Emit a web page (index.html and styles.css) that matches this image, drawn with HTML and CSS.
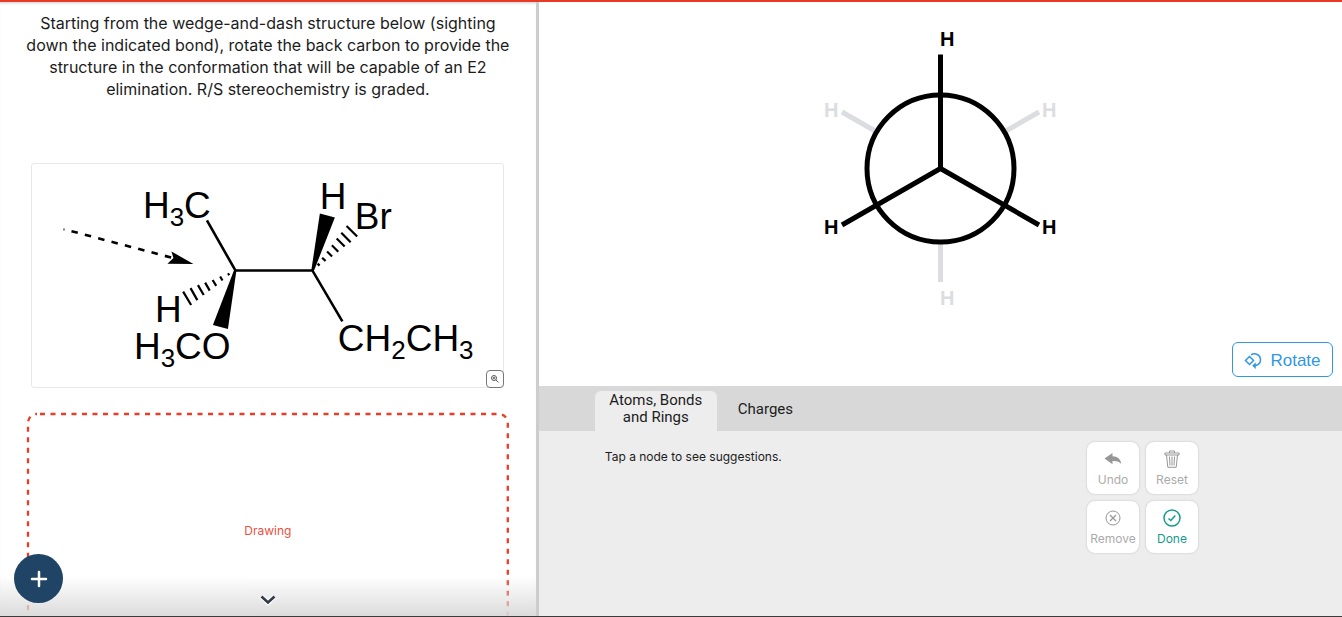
FILE: index.html
```html
<!DOCTYPE html>
<html lang="en">
<head>
  <meta charset="UTF-8">
  <meta name="viewport" content="width=device-width, initial-scale=1.0">
  <title>Newman Projection</title>
  <link rel="stylesheet" href="styles.css">
</head>
<body>
  <main class="workspace">
    <section class="question">
      <p class="question-text">Starting from the wedge-and-dash structure below (sighting down the indicated bond), rotate the back carbon to provide the structure in the conformation that will be capable of an E2 elimination. R/S stereochemistry is graded.</p>

      <div class="structure">
        <svg class="molecule" viewBox="32 164 471 223" role="img" aria-label="Wedge-and-dash structure">
          <!-- sight line -->
          <path d="M64 228.500v2" stroke="#000" stroke-width="1"/>
          <path d="M71.500 231.200L172 257.800" stroke="#000" stroke-width="2.600" stroke-dasharray="6.500 7.300"/>
          <path d="M193.500 264L171.500 251.500L173.500 258L167.500 263.700z"/>
          <!-- bonds -->
          <path d="M207 220.500L235.500 270.500H312.500L342.500 321.500" fill="none" stroke="#000" stroke-width="2.600"/>
          <path d="M234 270.500L213 325L228 329L236.500 270.500z"/>
          <path d="M311.500 270L320 213.500L335 217.500L314 271z"/>
          <!-- hashed bonds -->
          <path d="M228.100 273.300l1.200 2M220.200 276.600l2.400 4M212.700 280l3.600 6M205.200 282.700l4.600 8M198 285.200l5.800 9.800M190.600 288.200l6.800 12M183.200 291.700l8 13.400" stroke="#000" stroke-width="2.200"/>
          <path d="M317.700 263.700l2 2M322.300 257.700l3.400 3.400M327.200 251.500l5 5M332 245.300l6.400 6.400M336.800 238.600l8 8M341.400 232.800l9.400 9.400M346.700 226l10.600 10.600" stroke="#000" stroke-width="2.200"/>
          <g class="atom">
            <text x="143" y="218">H<tspan class="sub" dy="8">3</tspan><tspan dy="-8">C</tspan></text>
            <text x="155" y="322">H</text>
            <text x="134" y="359">H<tspan class="sub" dy="8">3</tspan><tspan dy="-8">CO</tspan></text>
            <text x="320" y="209">H</text>
            <text x="355" y="229">Br</text>
            <text x="338" y="351">CH<tspan class="sub" dy="8">2</tspan><tspan dy="-8">CH</tspan><tspan class="sub" dy="8">3</tspan></text>
          </g>
        </svg>
        <button class="zoom" type="button" aria-label="Enlarge">
          <svg width="8" height="8" viewBox="0 0 8 8" fill="none" stroke="#555">
            <circle cx="3" cy="3" r="2.500"/>
            <path d="M5 5l2.500 2.500M1.800 3h2.400M3 1.800v2.400"/>
          </svg>
        </button>
      </div>

      <div class="drawing">
        <svg class="drawing-border">
          <rect x="1" y="1" width="100%" height="100%" rx="9"/>
        </svg>
        <span>Drawing</span>
      </div>

      <div class="fade">
        <button class="scroll-down" type="button" aria-label="Scroll down">
          <svg width="18" height="12" viewBox="0 0 18 12" fill="none">
            <path d="M2.500 2.500L9 8.500L15.500 2.500" stroke="#fff" stroke-width="5"/>
            <path d="M2.500 2.500L9 8.500L15.500 2.500" stroke="#343b48" stroke-width="2.600"/>
          </svg>
        </button>
      </div>
      <button class="add" type="button" aria-label="Add">
        <svg width="18" height="18" viewBox="0 0 18 18" stroke="#fff" stroke-width="2.500" stroke-linecap="round">
          <path d="M9 2v14M2 9h14"/>
        </svg>
      </button>
    </section>

    <section class="editor">
      <div class="canvas">
        <svg class="newman" width="236" height="290" viewBox="822 20 236 290" role="img" aria-label="Newman projection">
          <g class="back">
            <path d="M842 112L876 131.500M1039 112L1005 131.500M940.500 242V282"/>
            <text x="824" y="117">H</text>
            <text x="1042" y="117">H</text>
            <text x="940" y="305">H</text>
          </g>
          <g class="front">
            <circle cx="940.500" cy="168.500" r="73.500"/>
            <path d="M940.500 54.500V168.500L842 225M940.500 168.500L1039 225"/>
            <text x="940" y="46">H</text>
            <text x="824" y="234">H</text>
            <text x="1042" y="234">H</text>
          </g>
        </svg>
        <button class="rotate" type="button">
          <svg width="18" height="18" viewBox="0 0 18 18" fill="none" stroke="#2f97e4" stroke-width="1.500">
            <path d="M5.500 4.500L9.500 8.500L5.500 12.500L1.500 8.500z"/>
            <path d="M7 2.800C11 .2 16.500 2.800 16.500 8C16.500 11.500 13.500 13.700 10 13.700"/>
            <path d="M11.500 10.800L8.500 13.700L11.500 16.600z" fill="#2f97e4" stroke-width=".5"/>
          </svg>
          Rotate
        </button>
      </div>

      <div class="tabs">
        <button class="tab active" type="button">Atoms, Bonds<br>and Rings</button>
        <button class="tab" type="button">Charges</button>
      </div>

      <div class="tools">
        <p class="hint">Tap a node to see suggestions.</p>
        <div class="tool-grid">
          <button class="tool" type="button">
            <svg width="18" height="18" viewBox="0 0 18 18" fill="#979797">
              <path d="M.5 8.500L8.500 3v3.200C13.500 6.200 16.800 9 17.300 14C15 11.300 12.500 10.800 8.500 10.900v3.300z"/>
            </svg>
            Undo
          </button>
          <button class="tool" type="button">
            <svg width="18" height="18" viewBox="0 0 18 18" fill="none" stroke="#979797">
              <path d="M2 3h14v2H2zM6.500 3V1h5v2M3.500 5l1.300 12.300h8.400L14.500 5M6.500 6.500l.5 9M9 6.500v9M11.500 6.500l-.5 9"/>
            </svg>
            Reset
          </button>
          <button class="tool" type="button">
            <svg width="18" height="18" viewBox="0 0 18 18" fill="none" stroke="#979797">
              <circle cx="9" cy="9" r="7"/>
              <path d="M6 6l6 6M12 6l-6 6" stroke-width="1.300"/>
            </svg>
            Remove
          </button>
          <button class="tool done" type="button">
            <svg width="18" height="18" viewBox="0 0 18 18" fill="none" stroke="#149c8c" stroke-width="1.500">
              <circle cx="9" cy="9" r="8"/>
              <path d="M5.500 9.500l2.300 2L12.300 6.500"/>
            </svg>
            Done
          </button>
        </div>
      </div>
    </section>
  </main>
</body>
</html>
```
FILE: styles.css
```css
* {
  box-sizing: border-box;
}
body {
  margin: 0;
  font-family: Inter, "Liberation Sans", sans-serif;
  color: #1c1c1c;
  background-color: #fff;
}
button {
  font-family: inherit;
  padding: 0;
  border: 0;
  background: none;
  cursor: pointer;
}
svg {
  display: block;
}
p {
  margin: 0;
}
.workspace {
  display: flex;
  height: 100vh;
  border-top: 2px solid #e93a25;
  border-bottom: 1px solid #3c3c3c;
}

/* Question side */
.question {
  position: relative;
  width: calc(40% - 1px);
  padding-top: 10px;
  overflow: hidden;
  box-shadow: inset 0 3px 3px -2px #ccc;
}
.question-text {
  height: 151px;
  padding: 0 20px;
  font-size: 16px;
  line-height: 22px;
  text-align: center;
}
.structure {
  position: relative;
  margin: 0 32px 0 31px;
  border: 1px solid #e8e8e8;
  border-radius: 3px;
}
.molecule {
  width: 100%;
}
.atom {
  font-family: "Liberation Sans", Arial, sans-serif;
  font-size: 37px;
}
.sub {
  font-size: 26px;
}
.zoom {
  position: absolute;
  right: -1px;
  bottom: -1px;
  display: flex;
  align-items: center;
  justify-content: center;
  width: 18px;
  height: 18px;
  border: 1px solid #777;
  border-radius: 4px;
  background-color: #fff;
}
.drawing {
  position: relative;
  display: flex;
  align-items: center;
  justify-content: center;
  height: 236px;
  margin: 25px 27px 0;
  font-size: 12px;
  color: #e8503f;
}
.drawing-border {
  position: absolute;
  top: 0;
  left: 0;
  width: calc(100% - 2px);
  height: calc(100% - 2px);
  overflow: visible;
}
.drawing-border rect {
  fill: none;
  stroke: #ea3c28;
  stroke-width: 2.3px;
  stroke-dasharray: 5 5.5;
  stroke-dashoffset: -3px;
}
.fade {
  position: absolute;
  left: 0;
  right: 0;
  bottom: 0;
  display: flex;
  align-items: flex-end;
  justify-content: center;
  height: 40px;
  padding-bottom: 10px;
  background: linear-gradient(rgba(255, 255, 255, 0), rgba(218, 218, 218, 0.95));
}
.add {
  position: absolute;
  left: 14px;
  bottom: 13px;
  display: flex;
  align-items: center;
  justify-content: center;
  width: 49px;
  height: 49px;
  border-radius: 50%;
  background-color: #204466;
}

/* Editor side */
.editor {
  flex: 1;
  display: flex;
  flex-direction: column;
  border-left: 3px solid #cdcdcd;
}
.canvas {
  flex: 1;
  display: flex;
  flex-direction: column;
  align-items: center;
  justify-content: space-between;
  padding: 18px 9px 9px;
}
.newman text {
  font-family: "Liberation Sans", Arial, sans-serif;
  font-size: 20px;
  font-weight: bold;
}
.newman path,
.newman circle {
  fill: none;
  stroke-width: 5px;
}
.front {
  fill: #000;
  stroke: none;
}
.front path,
.front circle {
  stroke: #000;
}
.back {
  fill: #dcdde1;
}
.back path {
  stroke: #dcdde1;
}
.rotate {
  display: flex;
  align-items: center;
  justify-content: center;
  gap: 8px;
  align-self: flex-end;
  width: 101px;
  height: 35px;
  padding-top: 2px;
  border: 1px solid #2f97e4;
  border-radius: 6px;
  font-family: "Liberation Sans", Arial, sans-serif;
  font-size: 17px;
  color: #2f97e4;
}
.tabs {
  display: flex;
  height: 45px;
  padding: 5px 56px 0;
  background-color: #d8d8d8;
}
.tab {
  padding: 0 21px 4px;
  border-radius: 6px 6px 0 0;
  font-family: Roboto, "Liberation Sans", sans-serif;
  font-size: 15px;
  line-height: 17px;
  color: #1c1c1c;
}
.tab.active {
  width: 122px;
  padding: 0 0 4px;
  background-color: #ededed;
}
.tools {
  display: flex;
  justify-content: space-between;
  height: 185px;
  padding: 11px 144px 0 66px;
  background-color: #ededed;
}
.hint {
  padding-top: 7px;
  font-size: 12px;
  line-height: 16px;
}
.tool-grid {
  display: grid;
  grid-template-columns: 52px 52px;
  grid-auto-rows: 52px;
  gap: 7px;
}
.tool {
  display: flex;
  flex-direction: column;
  align-items: center;
  justify-content: center;
  gap: 4px;
  padding-top: 2px;
  border-radius: 8px;
  background-color: #fff;
  box-shadow: 0 0 2px #bbb;
  font-size: 12px;
  line-height: 16px;
  color: #ababab;
}
.tool.done {
  color: #149c8c;
}
```
